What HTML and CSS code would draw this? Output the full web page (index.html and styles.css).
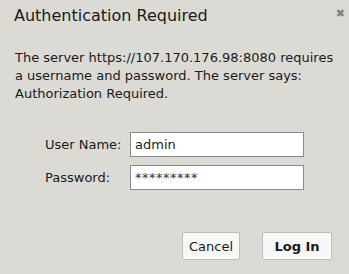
FILE: index.html
```html
<!DOCTYPE html>
<html lang="en">
<head>
    <meta charset="UTF-8">
    <title>Authentication Required</title>
    <link rel="stylesheet" href="styles.css">
</head>
<body>
    <div class="dialog">
        <div class="dialog-head">
            <h1 class="dialog-title">Authentication Required</h1>
            <span class="dialog-close">&#x2716;</span>
        </div>
        <p class="dialog-msg">The server https://107.170.176.98:8080 requires a username and password. The server says: Authorization Required.</p>

        <div class="fields">
            <label class="field-label" for="user">User Name:</label>
            <input id="user" class="field-input" type="text" value="admin">
            <label class="field-label" for="pass">Password:</label>
            <input id="pass" class="field-input pass" type="text" value="*********">
        </div>

        <div class="actions">
            <button class="btn">Cancel</button>
            <button class="btn btn-primary">Log In</button>
        </div>
    </div>
</body>
</html>
```

FILE: styles.css
```css
* {
    padding: 0;
    margin: 0;
    box-sizing: border-box;
}

body {
    width: 349px;
    height: 274px;
    background: #dcdad5;
    font-family: "DejaVu Sans", sans-serif;
    color: #1a1a1a;
    overflow: hidden;
}

.dialog {
    padding: 5px 15px 0 14px;
}

.dialog-head {
    display: flex;
    justify-content: space-between;
    align-items: flex-start;
}

.dialog-title {
    font-size: 16px;
    font-weight: normal;
    line-height: 22px;
}

.dialog-close {
    font-size: 11px;
    line-height: 11px;
    color: #808080;
    margin-right: -11px;
    margin-top: 3px;
}

.dialog-msg {
    margin-top: 22px;
    margin-left: 1px;
    font-size: 13px;
    line-height: 18px;
}

.fields {
    display: grid;
    grid-template-columns: 85px 174px;
    row-gap: 8px;
    align-items: center;
    margin-top: 29px;
    margin-left: 31px;
}

.field-label {
    font-size: 13px;
}

.field-input {
    height: 25px;
    border: 1px solid #8a8a8a;
    background: #fff;
    font-family: "DejaVu Sans", sans-serif;
    font-size: 13px;
    color: #1a1a1a;
    padding: 0 4px;
    outline: none;
}

.field-input.pass {
    font-size: 13px;
    letter-spacing: 0.5px;
    color: #333;
}

.actions {
    display: flex;
    justify-content: flex-end;
    gap: 22px;
    margin-top: 42px;
    margin-right: 2px;
}

.btn {
    height: 28px;
    width: 58px;
    border: 1px solid #bdbdbd;
    border-radius: 2px;
    background: #f8f8f8;
    font-family: "DejaVu Sans", sans-serif;
    font-size: 13px;
    color: #1a1a1a;
}

.btn-primary {
    width: 70px;
    font-weight: bold;
}
```
